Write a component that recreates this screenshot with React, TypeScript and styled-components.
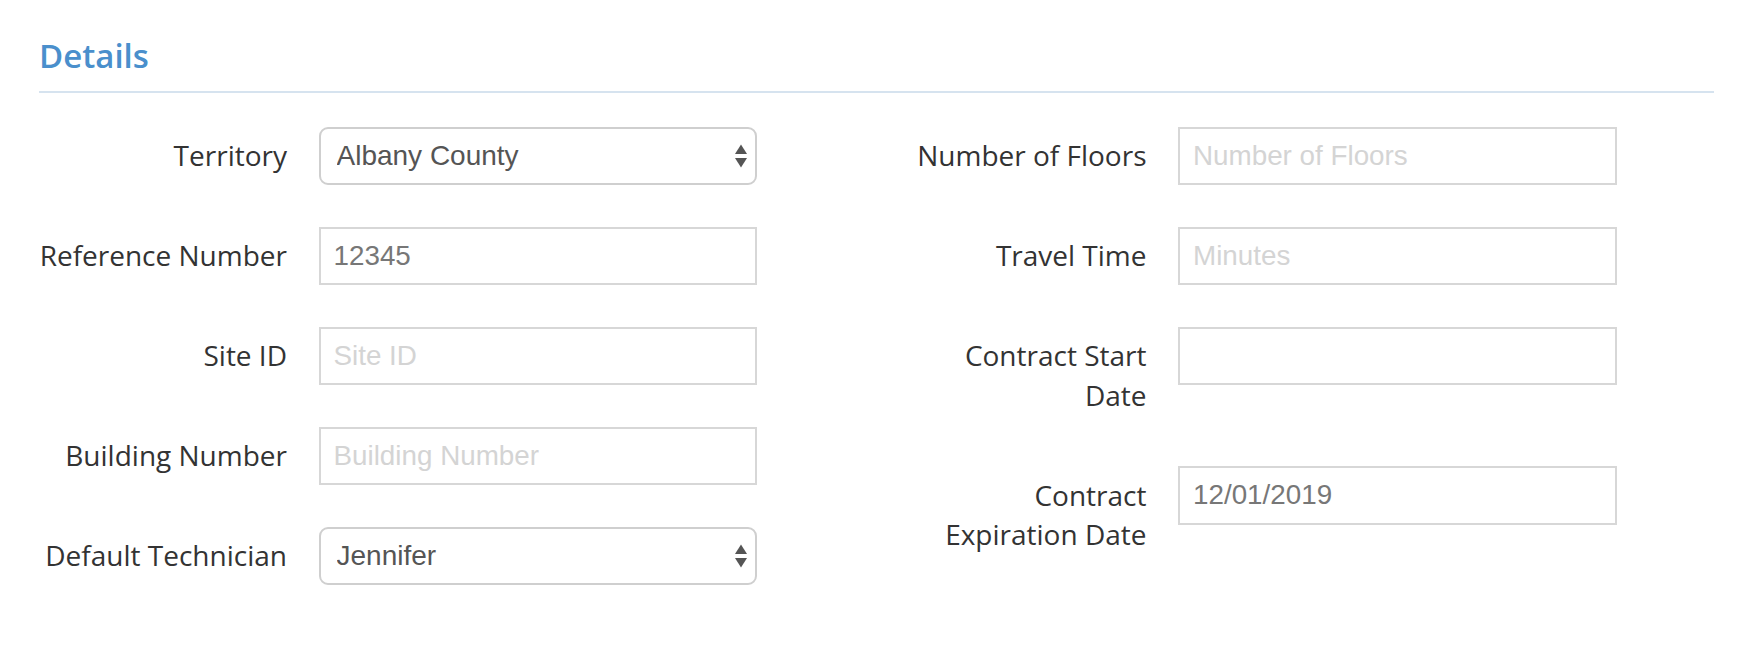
import React from "react";
import styled, { createGlobalStyle } from "styled-components";

const GlobalStyle = createGlobalStyle`
  html, body {
    margin: 0;
    padding: 0;
    background: #ffffff;
  }
  body {
    font-family: "Open Sans", "Liberation Sans", Arial, sans-serif;
  }
  * { box-sizing: border-box; }
`;

const Page = styled.div`
  padding: 33px 0 0 39px;
`;

const SectionTitle = styled.h2`
  margin: 0;
  width: 1675px;
  font-family: "Open Sans", "Liberation Sans", Arial, sans-serif;
  font-size: 33px;
  font-weight: 600;
  line-height: 45px;
  color: #4a8fcc;
  padding-bottom: 13px;
  border-bottom: 2px solid #d6e3ef;
`;

const FormGrid = styled.div`
  display: grid;
  grid-template-columns: 859.5px 859.5px;
  margin-top: 33.5px;
`;

const Column = styled.div`
  display: flex;
  flex-direction: column;
  gap: 41.5px;
`;

const FieldRow = styled.div`
  display: flex;
  align-items: flex-start;
`;

const Label = styled.label`
  flex: none;
  width: 248px;
  text-align: right;
  white-space: nowrap;
  font-family: "Open Sans", "Liberation Sans", Arial, sans-serif;
  font-size: 28px;
  line-height: 39.5px;
  padding: 9.5px 0;
  color: #333333;
`;

const Control = styled.div`
  flex: none;
  position: relative;
  margin-left: 31.5px;
  width: 438.5px;
  height: 58.5px;
`;

const TextInput = styled.input`
  display: block;
  width: 100%;
  height: 100%;
  margin: 0;
  border: 2px solid #d7d7d7;
  border-radius: 0;
  padding: 0 13px;
  font-family: "Liberation Sans", Arial, Helvetica, sans-serif;
  font-size: 27.8px;
  color: #777777;
  background: #ffffff;
  outline: none;
  &::placeholder {
    color: #d4d4d4;
    opacity: 1;
  }
`;

const Select = styled.select`
  display: block;
  width: 100%;
  height: 100%;
  margin: 0;
  appearance: none;
  -webkit-appearance: none;
  border: 2px solid #cfcfcf;
  border-radius: 9px;
  padding: 0 40px 0 16px;
  font-family: "Liberation Sans", Arial, Helvetica, sans-serif;
  font-size: 28px;
  color: #555555;
  background: #ffffff;
  outline: none;
`;

const Arrows = styled.svg`
  position: absolute;
  right: 9px;
  top: 50%;
  transform: translateY(-50%);
  pointer-events: none;
`;

const SelectArrows = () => (
  <Arrows width="14" height="26" viewBox="0 0 14 26">
    <path d="M7 1.5 L13 11 L1 11 Z" fill="#555" />
    <path d="M7 24.5 L13 15 L1 15 Z" fill="#555" />
  </Arrows>
);

type FieldProps = {
  label: React.ReactNode;
  children: React.ReactNode;
};

const Field = ({ label, children }: FieldProps) => (
  <FieldRow>
    <Label>{label}</Label>
    <Control>{children}</Control>
  </FieldRow>
);

const SelectField = ({ label, value }: { label: string; value: string }) => (
  <Field label={label}>
    <Select defaultValue={value}>
      <option value={value}>{value}</option>
    </Select>
    <SelectArrows />
  </Field>
);

export default function App() {
  return (
    <>
      <GlobalStyle />
      <Page>
        <SectionTitle>Details</SectionTitle>
        <FormGrid>
          <Column>
            <SelectField label="Territory" value="Albany County" />
            <Field label="Reference Number">
              <TextInput defaultValue="12345" />
            </Field>
            <Field label="Site ID">
              <TextInput placeholder="Site ID" />
            </Field>
            <Field label="Building Number">
              <TextInput placeholder="Building Number" />
            </Field>
            <SelectField label="Default Technician" value="Jennifer" />
          </Column>
          <Column>
            <Field label="Number of Floors">
              <TextInput placeholder="Number of Floors" />
            </Field>
            <Field label="Travel Time">
              <TextInput placeholder="Minutes" />
            </Field>
            <Field
              label={
                <>
                  Contract Start
                  <br />
                  Date
                </>
              }
            >
              <TextInput />
            </Field>
            <Field
              label={
                <>
                  Contract
                  <br />
                  Expiration Date
                </>
              }
            >
              <TextInput defaultValue="12/01/2019" />
            </Field>
          </Column>
        </FormGrid>
      </Page>
    </>
  );
}
